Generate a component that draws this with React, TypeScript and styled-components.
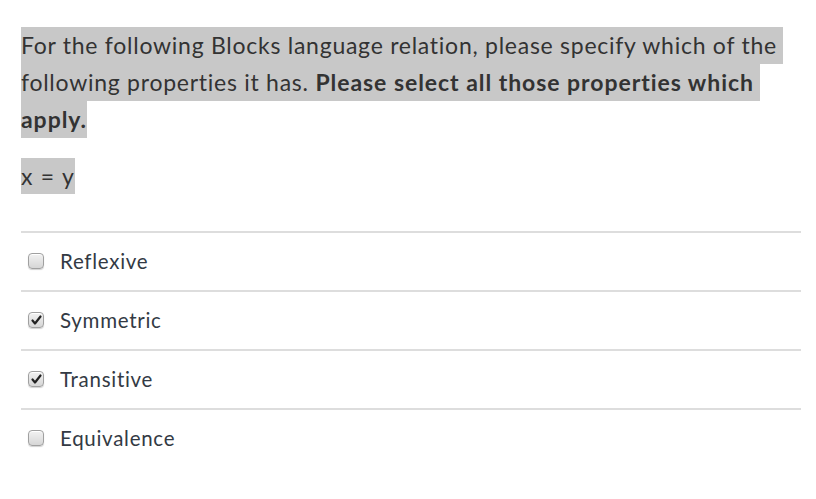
import React from 'react';
import styled, { createGlobalStyle } from 'styled-components';

const GlobalStyle = createGlobalStyle`
  * {
    margin: 0;
    padding: 0;
    box-sizing: border-box;
  }

  body {
    background: #ffffff;
    color: #333333;
    font-family: Lato, "Open Sans", sans-serif;
    font-variant-ligatures: none;
  }
`;

const Page = styled.div`
  padding: 27px 15px 0 21px;
`;

const Question = styled.div`
  font-size: 23px;
  line-height: 37px;
  letter-spacing: 0.74px;
  color: #333333;
`;

const HighlightLine = styled.span`
  display: block;
  width: fit-content;
  background: #c8c8c8;
  white-space: pre;
`;

const Strong = styled.strong`
  font-weight: 700;
  letter-spacing: 0.95px;
`;

const Formula = styled(HighlightLine)`
  margin-top: 20px;
  font-size: 23px;
  line-height: 36px;
  letter-spacing: 1px;
  word-spacing: 0.5px;
`;

const Options = styled.ul`
  list-style: none;
  margin-top: 37px;
`;

const Option = styled.li`
  display: flex;
  align-items: center;
  height: 59px;
  border-top: 2px solid #dddddd;
  padding-left: 7px;
  padding-bottom: 2px;
`;

const Box = styled.span<{ $checked: boolean }>`
  width: 16px;
  height: 16px;
  flex: none;
  border-radius: 4px;
  border: 1px solid #a0a0a0;
  background: linear-gradient(180deg, #f2f2f2 0%, #d6d6d6 100%);
  box-shadow: inset 0 1px 0 #ffffff, 0 1px 1px rgba(0, 0, 0, 0.18);
  display: flex;
  align-items: center;
  justify-content: center;

  svg {
    display: ${({ $checked }) => ($checked ? 'block' : 'none')};
  }
`;

const Label = styled.span`
  margin-left: 16px;
  font-size: 20.5px;
  letter-spacing: 0.72px;
  color: #333a44;
`;

const options = [
  { name: 'Reflexive', checked: false },
  { name: 'Symmetric', checked: true },
  { name: 'Transitive', checked: true },
  { name: 'Equivalence', checked: false },
];

const Check = () => (
  <svg width="11" height="10" viewBox="0 0 11 10">
    <path d="M1.5 5.5 L4 8.5 L9.5 1.5" fill="none" stroke="#222" strokeWidth="2.2" strokeLinecap="round" strokeLinejoin="round" />
  </svg>
);

export default function App() {
  return (
    <>
      <GlobalStyle />
      <Page>
        <Question>
          <HighlightLine>For the following Blocks language relation, please specify which of the </HighlightLine>
          <HighlightLine>
            following properties it has. <Strong>Please select all those properties which </Strong>
          </HighlightLine>
          <HighlightLine>
            <Strong>apply.</Strong>
          </HighlightLine>
        </Question>
        <Formula>x = y</Formula>
        <Options>
          {options.map((o) => (
            <Option key={o.name}>
              <Box $checked={o.checked}>
                <Check />
              </Box>
              <Label>{o.name}</Label>
            </Option>
          ))}
        </Options>
      </Page>
    </>
  );
}
